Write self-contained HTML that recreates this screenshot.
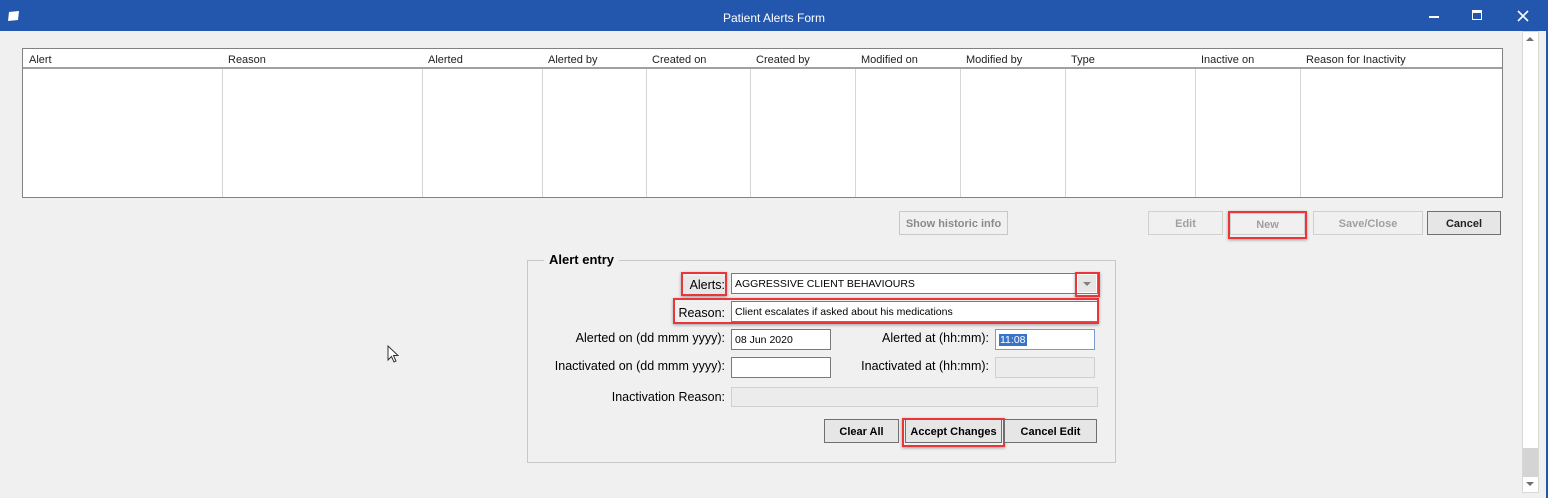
<!DOCTYPE html>
<html><head><style>
*{box-sizing:border-box;margin:0;padding:0}
body{width:1548px;height:498px;background:#f0f0f0;font-family:"Liberation Sans",Tahoma,sans-serif;font-size:11px;color:#000;position:relative;overflow:hidden}
.a{position:absolute}
.title{left:0;top:0;width:1548px;height:31px;background:#2357ad;color:#fff;font-size:12px;text-align:center;line-height:36px}
.tbl{left:22px;top:48px;width:1481px;height:150px;border:1px solid #828282;background:#fff}
.hd{top:0;height:20px;border-bottom:2px solid #a0a0a0;width:100%}
.col{top:5px;font-size:11px;color:#222}
.vl{top:20px;bottom:0;width:1px;background:#d6d6d6}
.btn{border:1px solid #adadad;background:#e6e6e6;text-align:center;font-weight:bold;font-size:11px;line-height:24px;height:24px}
.dis{color:#a0a0a0;background:#f0f0f0;border-color:#d0d0d0}
.red{border:2px solid #e8363a;box-shadow:0 1px 3px rgba(0,0,0,.35)}
.lbl{font-size:12.5px;text-align:right}
.inp{background:#fff;border:1px solid #7a7a7a;height:20px;font-size:10.5px;line-height:20px;padding-left:3px}
.ro{background:#ececec;border-color:#d0d0d0}
</style></head><body>
<div class="a title">Patient Alerts Form</div>
<svg class="a" style="left:7px;top:10px" width="14" height="12"><path d="M2 2 L12 1 L11 10 L1 11Z" fill="#fff"/></svg>
<div class="a" style="left:1429px;top:16px;width:10px;height:1.5px;background:#fff"></div>
<div class="a" style="left:1472px;top:10px;width:10px;height:10px;border:1.5px solid #fff;border-top-width:3px"></div>
<svg class="a" style="left:1517px;top:10px" width="12" height="12"><path d="M1 1L11 11M11 1L1 11" stroke="#fff" stroke-width="1.6"/></svg>
<div class="a" style="left:1546px;top:31px;width:2px;height:467px;background:#2357ad"></div>

<div class="a tbl">
 <div class="a hd"></div>
 <div class="a col" style="left:6px">Alert</div>
 <div class="a col" style="left:205px">Reason</div>
 <div class="a col" style="left:405px">Alerted</div>
 <div class="a col" style="left:525px">Alerted by</div>
 <div class="a col" style="left:629px">Created on</div>
 <div class="a col" style="left:733px">Created by</div>
 <div class="a col" style="left:838px">Modified on</div>
 <div class="a col" style="left:943px">Modified by</div>
 <div class="a col" style="left:1048px">Type</div>
 <div class="a col" style="left:1178px">Inactive on</div>
 <div class="a col" style="left:1283px">Reason for Inactivity</div>
 <div class="a vl" style="left:199px"></div><div class="a vl" style="left:399px"></div>
 <div class="a vl" style="left:519px"></div><div class="a vl" style="left:623px"></div>
 <div class="a vl" style="left:727px"></div><div class="a vl" style="left:832px"></div>
 <div class="a vl" style="left:937px"></div><div class="a vl" style="left:1042px"></div>
 <div class="a vl" style="left:1172px"></div><div class="a vl" style="left:1277px"></div>
</div>

<div class="a" style="left:1522px;top:31px;width:17px;height:462px;background:#fff;border:1px solid #d8d8d8"></div>
<div class="a" style="left:1523px;top:448px;width:15px;height:29px;background:#d4d4d4"></div>
<svg class="a" style="left:1524px;top:34px" width="12" height="10"><path d="M2 7L6 3L10 7Z" fill="#707070"/></svg>
<svg class="a" style="left:1524px;top:479px" width="12" height="10"><path d="M2 3L6 7L10 3Z" fill="#707070"/></svg>

<div class="a btn dis" style="left:899px;top:211px;width:109px;border-color:#c8c8c8;color:#8a8a8a">Show historic info</div>
<div class="a btn dis" style="left:1148px;top:211px;width:75px">Edit</div>
<div class="a btn dis" style="left:1230px;top:213px;width:75px;height:22px;line-height:22px">New</div>
<div class="a red" style="left:1228px;top:211px;width:79px;height:28px"></div>
<div class="a btn dis" style="left:1313px;top:211px;width:110px">Save/Close</div>
<div class="a btn" style="left:1427px;top:211px;width:74px;border-color:#707070;color:#222">Cancel</div>

<div class="a" style="left:527px;top:260px;width:589px;height:203px;border:1px solid #c8c8c8"></div>
<div class="a" style="left:544px;top:252px;background:#f0f0f0;padding:0 5px;font-weight:bold;font-size:13px">Alert entry</div>

<div class="a lbl" style="left:683px;top:276px;width:42px;height:18px;line-height:18px;background:#e8e8e8">Alerts:</div>
<div class="a red" style="left:681px;top:272px;width:46px;height:24px"></div>
<div class="a inp" style="left:731px;top:273px;width:367px;height:21px">AGGRESSIVE CLIENT BEHAVIOURS</div>
<div class="a" style="left:1078px;top:275px;width:18px;height:17px;background:#e6e6e6"></div>
<svg class="a" style="left:1081px;top:280px" width="12" height="8"><path d="M2 2L6 6L10 2Z" fill="#808080"/></svg>
<div class="a red" style="left:1075px;top:272px;width:25px;height:25px"></div>

<div class="a lbl" style="left:675px;top:304px;width:50px;line-height:18px">Reason:</div>
<div class="a inp" style="left:731px;top:301px;width:367px;height:21px">Client escalates if asked about his medications</div>
<div class="a red" style="left:673px;top:298px;width:426px;height:26px"></div>

<div class="a lbl" style="left:530px;top:331px;width:195px">Alerted on (dd mmm yyyy):</div>
<div class="a inp" style="left:731px;top:329px;width:100px;height:21px">08 Jun 2020</div>
<div class="a lbl" style="left:830px;top:331px;width:159px">Alerted at (hh:mm):</div>
<div class="a inp" style="left:995px;top:329px;width:100px;height:21px;border-color:#7a9ad0"><span style="background:#3a74c8;color:#fff;padding:0 1px">11:08</span></div>

<div class="a lbl" style="left:530px;top:359px;width:195px">Inactivated on (dd mmm yyyy):</div>
<div class="a inp" style="left:731px;top:357px;width:100px;height:21px"></div>
<div class="a lbl" style="left:830px;top:359px;width:159px">Inactivated at (hh:mm):</div>
<div class="a inp ro" style="left:995px;top:357px;width:100px;height:21px"></div>

<div class="a lbl" style="left:530px;top:390px;width:195px">Inactivation Reason:</div>
<div class="a inp ro" style="left:731px;top:387px;width:367px;height:20px"></div>

<div class="a btn" style="left:824px;top:419px;width:75px;border-color:#707070">Clear All</div>
<div class="a btn" style="left:905px;top:419px;width:97px;border-color:#707070">Accept Changes</div>
<div class="a red" style="left:902px;top:418px;width:103px;height:29px"></div>
<div class="a btn" style="left:1004px;top:419px;width:93px;border-color:#707070">Cancel Edit</div>

<svg class="a" style="left:387px;top:345px" width="14" height="20"><path d="M1 1L1 15L4.5 11.5L7 17L9 16L6.5 10.5L11 10.5Z" fill="#fff" stroke="#333" stroke-width="1"/></svg>
</body></html>
